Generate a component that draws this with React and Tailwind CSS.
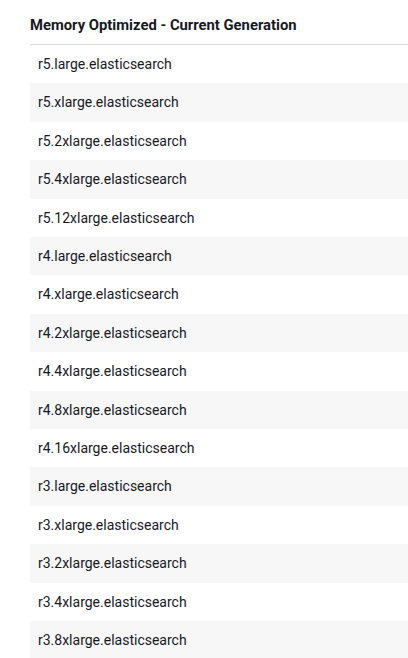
const rows = [
  "r5.large.elasticsearch",
  "r5.xlarge.elasticsearch",
  "r5.2xlarge.elasticsearch",
  "r5.4xlarge.elasticsearch",
  "r5.12xlarge.elasticsearch",
  "r4.large.elasticsearch",
  "r4.xlarge.elasticsearch",
  "r4.2xlarge.elasticsearch",
  "r4.4xlarge.elasticsearch",
  "r4.8xlarge.elasticsearch",
  "r4.16xlarge.elasticsearch",
  "r3.large.elasticsearch",
  "r3.xlarge.elasticsearch",
  "r3.2xlarge.elasticsearch",
  "r3.4xlarge.elasticsearch",
  "r3.8xlarge.elasticsearch",
];

export default function App() {
  return (
    <div
      className="h-[658px] overflow-hidden bg-white pl-[30px] pt-[5.6px] text-[14px] leading-[22.4px] text-[#16191f]"
      style={{ fontFamily: 'Roboto, "Noto Sans", sans-serif' }}
    >
      <div className="w-[420px]">
        <div className="border-b border-[#dadada] py-2 text-[14.8px] font-bold">
          Memory Optimized - Current Generation
        </div>
        {rows.map((name, i) => (
          <div
            key={name}
            className={`px-2 py-2 ${i % 2 === 1 ? "bg-[#f7f7f7]" : "bg-white"}`}
          >
            {name}
          </div>
        ))}
      </div>
    </div>
  );
}
